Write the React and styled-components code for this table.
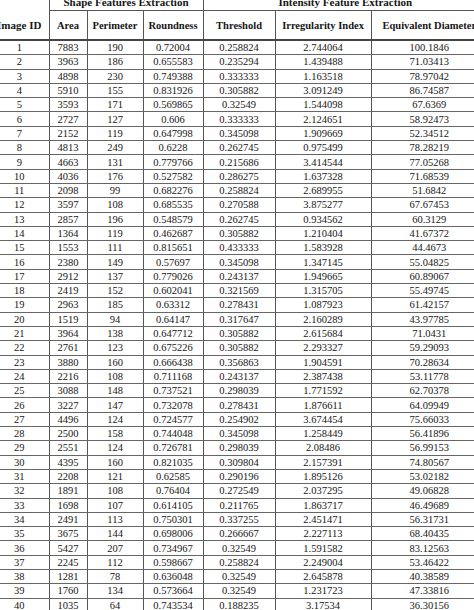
import { createGlobalStyle, styled } from "styled-components";

const GlobalStyle = createGlobalStyle`
  html, body {
    margin: 0;
    padding: 0;
    background: #ffffff;
    overflow: hidden;
  }
  body {
    font-family: "Liberation Serif", "Times New Roman", serif;
    color: #161616;
  }
`;

const Page = styled.div`
  width: 474px;
  height: 610px;
  overflow: hidden;
  background: #fff;
`;

const Table = styled.table`
  margin: -4px 0 0 -10px;
  width: 497px;
  table-layout: fixed;
  border-collapse: collapse;
  font-size: 10.5px;
`;

const GroupHead = styled.th`
  height: 12px;
  padding: 0 0 2px;
  font-weight: bold;
  font-size: 11px;
  text-align: center;
  vertical-align: bottom;
  line-height: 12px;
  border-left: ${(p) => (p.$blank ? "none" : "1px solid #555")};
  border-bottom: ${(p) => (p.$blank ? "none" : "1px solid #555")};
`;

const ColHead = styled.th`
  height: 28px;
  padding: 0;
  font-weight: bold;
  font-size: ${(p) => (p.$first ? "11px" : "10.5px")};
  text-align: center;
  white-space: nowrap;
  border-left: ${(p) => (p.$first ? "none" : "1px solid #555")};
  border-bottom: 2px solid #444;
`;

const Cell = styled.td`
  height: 13.3px;
  padding: 0;
  line-height: 13px;
  text-align: center;
  white-space: nowrap;
  border-left: ${(p) => (p.$first ? "none" : "1px solid #555")};
  border-bottom: 1px solid #666;
`;

const widths = [59, 38, 56, 60, 72, 96, 116];

const rows = [
  [1, 7883, 190, "0.72004", "0.258824", "2.744064", "100.1846"],
  [2, 3963, 186, "0.655583", "0.235294", "1.439488", "71.03413"],
  [3, 4898, 230, "0.749388", "0.333333", "1.163518", "78.97042"],
  [4, 5910, 155, "0.831926", "0.305882", "3.091249", "86.74587"],
  [5, 3593, 171, "0.569865", "0.32549", "1.544098", "67.6369"],
  [6, 2727, 127, "0.606", "0.333333", "2.124651", "58.92473"],
  [7, 2152, 119, "0.647998", "0.345098", "1.909669", "52.34512"],
  [8, 4813, 249, "0.6228", "0.262745", "0.975499", "78.28219"],
  [9, 4663, 131, "0.779766", "0.215686", "3.414544", "77.05268"],
  [10, 4036, 176, "0.527582", "0.286275", "1.637328", "71.68539"],
  [11, 2098, 99, "0.682276", "0.258824", "2.689955", "51.6842"],
  [12, 3597, 108, "0.685535", "0.270588", "3.875277", "67.67453"],
  [13, 2857, 196, "0.548579", "0.262745", "0.934562", "60.3129"],
  [14, 1364, 119, "0.462687", "0.305882", "1.210404", "41.67372"],
  [15, 1553, 111, "0.815651", "0.433333", "1.583928", "44.4673"],
  [16, 2380, 149, "0.57697", "0.345098", "1.347145", "55.04825"],
  [17, 2912, 137, "0.779026", "0.243137", "1.949665", "60.89067"],
  [18, 2419, 152, "0.602041", "0.321569", "1.315705", "55.49745"],
  [19, 2963, 185, "0.63312", "0.278431", "1.087923", "61.42157"],
  [20, 1519, 94, "0.64147", "0.317647", "2.160289", "43.97785"],
  [21, 3964, 138, "0.647712", "0.305882", "2.615684", "71.0431"],
  [22, 2761, 123, "0.675226", "0.305882", "2.293327", "59.29093"],
  [23, 3880, 160, "0.666438", "0.356863", "1.904591", "70.28634"],
  [24, 2216, 108, "0.711168", "0.243137", "2.387438", "53.11778"],
  [25, 3088, 148, "0.737521", "0.298039", "1.771592", "62.70378"],
  [26, 3227, 147, "0.732078", "0.278431", "1.876611", "64.09949"],
  [27, 4496, 124, "0.724577", "0.254902", "3.674454", "75.66033"],
  [28, 2500, 158, "0.744048", "0.345098", "1.258449", "56.41896"],
  [29, 2551, 124, "0.726781", "0.298039", "2.08486", "56.99153"],
  [30, 4395, 160, "0.821035", "0.309804", "2.157391", "74.80567"],
  [31, 2208, 121, "0.62585", "0.290196", "1.895126", "53.02182"],
  [32, 1891, 108, "0.76404", "0.272549", "2.037295", "49.06828"],
  [33, 1698, 107, "0.614105", "0.211765", "1.863717", "46.49689"],
  [34, 2491, 113, "0.750301", "0.337255", "2.451471", "56.31731"],
  [35, 3675, 144, "0.698006", "0.266667", "2.227113", "68.40435"],
  [36, 5427, 207, "0.734967", "0.32549", "1.591582", "83.12563"],
  [37, 2245, 112, "0.598667", "0.258824", "2.249004", "53.46422"],
  [38, 1281, 78, "0.636048", "0.32549", "2.645878", "40.38589"],
  [39, 1760, 134, "0.573664", "0.32549", "1.231723", "47.33816"],
  [40, 1035, 64, "0.743534", "0.188235", "3.17534", "36.30156"],
];

const headers = [
  "Image ID",
  "Area",
  "Perimeter",
  "Roundness",
  "Threshold",
  "Irregularity Index",
  "Equivalent Diameter",
];

export default function App() {
  return (
    <Page>
      <GlobalStyle />
      <Table>
        <colgroup>
          {widths.map((w, i) => (
            <col key={i} style={{ width: w }} />
          ))}
        </colgroup>
        <thead>
          <tr>
            <GroupHead $blank />
            <GroupHead colSpan={3}>Shape Features Extraction</GroupHead>
            <GroupHead colSpan={3}>Intensity Feature Extraction</GroupHead>
          </tr>
          <tr>
            {headers.map((h, i) => (
              <ColHead key={h} $first={i === 0}>
                {h}
              </ColHead>
            ))}
          </tr>
        </thead>
        <tbody>
          {rows.map((r) => (
            <tr key={r[0]}>
              {r.map((v, i) => (
                <Cell key={i} $first={i === 0}>
                  {v}
                </Cell>
              ))}
            </tr>
          ))}
        </tbody>
      </Table>
    </Page>
  );
}
